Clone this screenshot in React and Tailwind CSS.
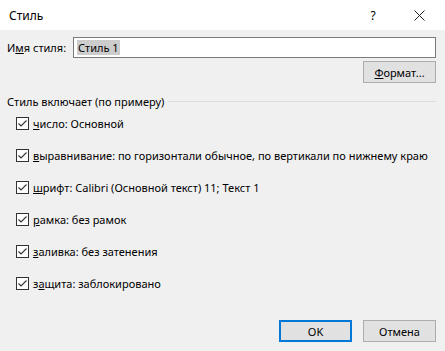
import React from 'react'

const items = [
  { key: 'ч', rest: 'исло: Основной' },
  { key: 'в', rest: 'ыравнивание: по горизонтали обычное, по вертикали по нижнему краю' },
  { key: 'ш', rest: 'рифт: Calibri (Основной текст) 11; Текст 1' },
  { key: 'р', rest: 'амка: без рамок' },
  { key: 'з', rest: 'аливка: без затенения' },
  { pre: 'з', key: 'а', rest: 'щита: заблокировано' },
]

function Check() {
  return (
    <svg width="13" height="13" viewBox="0 0 13 13" className="shrink-0">
      <rect x="0.5" y="0.5" width="12" height="12" fill="#ffffff" stroke="#333333" />
      <path d="M2.5 6.5 L5 9 L10.5 3.5" fill="none" stroke="#333333" strokeWidth="1.1" />
    </svg>
  )
}

export default function App() {
  return (
    <div
      className="w-[445px] h-[351px] flex flex-col text-[11px] leading-[15px] text-black overflow-hidden"
      style={{ fontFamily: '"Noto Sans", "Open Sans", sans-serif' }}
    >
      {/* заголовок */}
      <div className="h-[30px] bg-white flex items-center pl-[9px] shrink-0 text-[12px]">
        <span className="flex-1">Стиль</span>
        <span className="w-[12px] text-center mr-[35px]">?</span>
        <svg width="11" height="11" viewBox="0 0 11 11" className="mr-[20px]">
          <path d="M0.5 0.5 L10.5 10.5 M10.5 0.5 L0.5 10.5" stroke="#222" strokeWidth="1" />
        </svg>
      </div>

      <div className="flex-1 bg-[#f0f0f0] flex flex-col pl-[7px] pr-[9px]">
        <div className="flex items-center mt-[7px]">
          <span className="w-[66px] whitespace-nowrap">
            И<u>м</u>я стиля:
          </span>
          <div className="h-[21px] w-[363px] bg-white border border-[#7a7a7a] flex items-center pl-[3px]">
            <span className="bg-[#cccccc] px-[1px] leading-[15px]">Стиль 1</span>
          </div>
        </div>

        <div className="flex justify-end mt-[3px]">
          <div className="w-[73px] h-[22px] bg-[#e1e1e1] border border-[#adadad] flex items-center justify-center">
            <span>
              <u>Ф</u>ормат...
            </span>
          </div>
        </div>

        <div className="flex items-center mt-[10px] h-[16px]">
          <span className="mr-[4px] whitespace-nowrap">Стиль включает (по примеру)</span>
          <div className="flex-1 h-px bg-[#dcdcdc]" />
        </div>

        <div className="flex flex-col pl-[9px] -mt-[2px]">
          {items.map((it, i) => (
            <div key={i} className="h-[32px] flex items-center gap-[4px] whitespace-nowrap">
              <Check />
              <span>
                {it.pre}
                <u>{it.key}</u>
                {it.rest}
              </span>
            </div>
          ))}
        </div>

        <div className="flex justify-end gap-[11px] mt-[21px]">
          <div className="w-[73px] h-[22px] bg-[#e1e1e1] border-2 border-[#0078d7] flex items-center justify-center">
            OK
          </div>
          <div className="w-[73px] h-[22px] bg-[#e1e1e1] border border-[#adadad] flex items-center justify-center">
            Отмена
          </div>
        </div>
      </div>
    </div>
  )
}
